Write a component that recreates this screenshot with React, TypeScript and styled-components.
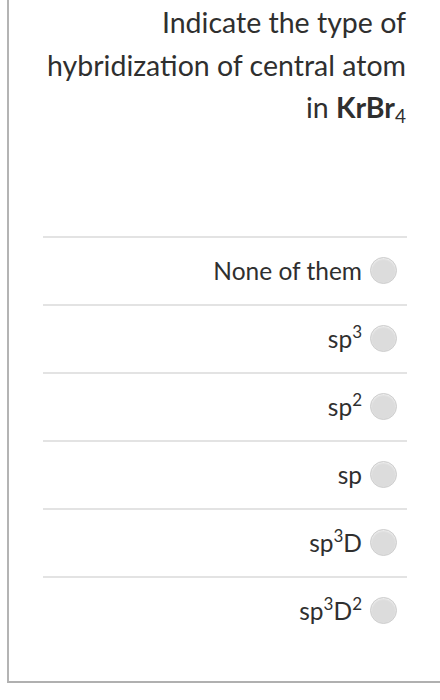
import React from "react";
import styled, { createGlobalStyle } from "styled-components";

const GlobalStyle = createGlobalStyle`
  html, body {
    margin: 0;
    padding: 0;
    background: #fff;
    overflow: hidden;
  }
  body {
    font-family: Lato, "Open Sans", "Liberation Sans", sans-serif;
    color: #2f2f2f;
  }
`;

const Card = styled.div`
  margin-left: 7px;
  height: 681px;
  border-left: 2px solid #b4b4b4;
  border-bottom: 2px solid #b0b0b0;
  background: #fff;
  display: flex;
  flex-direction: column;
`;

const Question = styled.div`
  padding: 1px 34px 0 0;
  font-size: 28.5px;
  line-height: 42.5px;
  text-align: right;
  b {
    font-weight: 700;
  }
  sub {
    font-size: 19px;
    vertical-align: -5px;
    line-height: 0;
  }
`;

const Options = styled.ul`
  list-style: none;
  margin: 107px 33px 0 34px;
  padding: 0;
`;

const Option = styled.li`
  height: 66px;
  border-top: 2px solid #e3e3e3;
  display: flex;
  align-items: center;
  justify-content: flex-end;
  gap: 8px;
  padding-right: 10px;
  font-size: 24.5px;
  sup {
    font-size: 17px;
    line-height: 0;
    vertical-align: 10px;
  }
`;

const Radio = styled.span`
  width: 25px;
  height: 25px;
  border-radius: 50%;
  background: #dcdcdc;
  border: 1px solid #cfcfcf;
  box-shadow: inset 0 1px 2px rgba(255, 255, 255, 0.6);
  flex-shrink: 0;
`;

const options: React.ReactNode[] = [
  <>None of them</>,
  <>
    sp<sup>3</sup>
  </>,
  <>
    sp<sup>2</sup>
  </>,
  <>sp</>,
  <>
    sp<sup>3</sup>D
  </>,
  <>
    sp<sup>3</sup>D<sup>2</sup>
  </>,
];

export default function App() {
  return (
    <>
      <GlobalStyle />
      <Card>
        <Question>
          Indicate the type of
          <br />
          hybridization of central atom
          <br />
          in <b>KrBr</b>
          <sub>4</sub>
        </Question>
        <Options>
          {options.map((label, idx) => (
            <Option key={idx}>
              <span>{label}</span>
              <Radio />
            </Option>
          ))}
        </Options>
      </Card>
    </>
  );
}
